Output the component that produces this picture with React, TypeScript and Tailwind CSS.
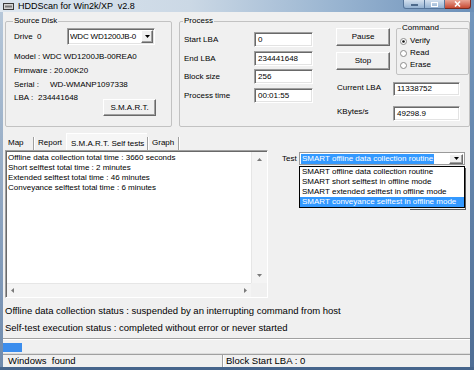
import React from "react";

const sunken =
  "bg-white border border-t-[#a0a0a0] border-l-[#a0a0a0] border-r-white border-b-white shadow-[inset_1px_1px_0_#696969,inset_-1px_-1px_0_#e3e3e3]";
const raised =
  "bg-[#f0f0f0] border border-t-white border-l-white border-r-[#696969] border-b-[#696969] shadow-[inset_-1px_-1px_0_#a0a0a0]";

const Field = ({ value, className = "" }: { value: string; className?: string }) => (
  <div className={`${sunken} flex items-center pl-[3px] text-[8px] leading-none ${className}`}>
    {value}
  </div>
);

const Btn = ({ label, className = "" }: { label: string; className?: string }) => (
  <div className={`${raised} flex items-center justify-center text-[8px] leading-none ${className}`}>
    {label}
  </div>
);

const DownArrow = ({ color = "#000" }: { color?: string }) => (
  <svg width="5" height="3" viewBox="0 0 5 3">
    <path d="M0 0h5L2.5 3z" fill={color} />
  </svg>
);

const Radio = ({ checked }: { checked?: boolean }) => (
  <svg width="7" height="7" viewBox="0 0 7 7">
    <circle cx="3.5" cy="3.5" r="3" fill="white" stroke="#8a8a8a" strokeWidth="1" />
    {checked && <circle cx="3.5" cy="3.5" r="1.3" fill="#111" />}
  </svg>
);

const Group = ({
  label,
  legendClass,
  className = "",
  children,
}: {
  label: string;
  legendClass: string;
  className?: string;
  children: React.ReactNode;
}) => (
  <fieldset className={`border border-[#c2c2c2] rounded-[2px] min-w-0 ${className}`}>
    <legend className={`px-[1px] text-[8px] leading-[10px] ${legendClass}`}>{label}</legend>
    {children}
  </fieldset>
);

const ProcessRow = ({ label, value, className = "" }: { label: string; value: string; className?: string }) => (
  <div className={`flex items-center h-[15px] ${className}`}>
    <span className="w-[70px] text-[8px] leading-[10px] pt-[1px]">{label}</span>
    <Field value={value} className="w-[59px] h-[15px]" />
  </div>
);

const logLines = [
  "Offline data collection total time : 3660 seconds",
  "Short selftest total time : 2 minutes",
  "Extended selftest total time : 46 minutes",
  "Conveyance selftest total time : 6 minutes",
];

const tests = [
  "SMART offline data collection routine",
  "SMART short selftest in offline mode",
  "SMART extended selftest in offline mode",
  "SMART conveyance selftest in offline mode",
];

export default function App() {
  return (
    <div className="w-[474px] h-[370px] flex flex-col overflow-hidden font-['Liberation_Sans',Arial,sans-serif] text-black">
      {/* title bar */}
      <div className="h-[12px] flex items-center bg-[linear-gradient(90deg,#dde6ef_0%,#cbd8e5_40%,#97b3d0_72%,#6b8fb8_100%)]">
        <svg width="11" height="7" viewBox="0 0 11 7" className="ml-[3px]">
          <rect x="0.5" y="0.5" width="10" height="6" fill="#d4d4d4" stroke="#3a3a3a" />
          <rect x="2" y="2.5" width="7" height="2" fill="#7a7a7a" />
        </svg>
        <span className="ml-[4px] text-[9px] leading-none whitespace-pre">HDDScan for Win2k/XP  v2.8</span>
        <div className="ml-auto mr-[3px] self-start flex">
          <div className="w-[22px] h-[9px] rounded-bl-[3px] border border-t-0 border-[#56759a] bg-[linear-gradient(180deg,#d3e0ee,#94b2d2)] flex justify-center items-end pb-[2px]">
            <div className="w-[7px] h-[2px] bg-white border border-[#4d6a8c]" />
          </div>
          <div className="w-[20px] h-[9px] border border-t-0 border-l-0 border-[#56759a] bg-[linear-gradient(180deg,#d3e0ee,#94b2d2)] flex justify-center items-end pb-[1px]">
            <div className="w-[7px] h-[5px] border-[1.5px] border-white" />
          </div>
          <div className="w-[26px] h-[9px] rounded-br-[3px] border border-t-0 border-l-0 border-[#7a2a20] bg-[linear-gradient(180deg,#e9a596,#c74a33)] flex justify-center items-center">
            <svg width="7" height="6" viewBox="0 0 7 6">
              <path d="M1 0.5l5 5M6 0.5l-5 5" stroke="white" strokeWidth="1.6" />
            </svg>
          </div>
        </div>
      </div>

      <div className="flex flex-1 min-h-0">
        <div className="w-[3px] bg-[linear-gradient(180deg,#b6c7d9,#6e8aad)]" />

        {/* client area */}
        <div className="flex-1 min-w-0 bg-[#f0f0f0] flex flex-col text-[8px] leading-[10px]">
          {/* groups */}
          <div className="flex pt-[4px] pl-[2px] gap-[7px] h-[115px]">
            <Group label="Source Disk" legendClass="ml-[7px]" className="w-[167px] h-[111px]">
              <div className="pl-[8px] pt-[2px]">
                <div className="flex items-center h-[17px]">
                  <span className="w-[23px]">Drive</span>
                  <span className="w-[30px]">0</span>
                  <div className={`${sunken} w-[88px] h-[17px] flex items-center pl-[2px] overflow-hidden`}>
                    <span className="flex-1 whitespace-nowrap overflow-hidden tracking-[-0.2px]">WDC WD1200JB-0</span>
                    <div className={`${raised} w-[12px] h-[13px] mr-[1px] flex items-center justify-center shrink-0`}>
                      <DownArrow />
                    </div>
                  </div>
                </div>
                <div className="mt-[7px]">Model : WDC WD1200JB-00REA0</div>
                <div className="mt-[4px]">Firmware : 20.00K20</div>
                <div className="mt-[4px] flex">
                  <span className="w-[36px]">Serial :</span>
                  <span>WD-WMANP1097338</span>
                </div>
                <div className="mt-[3px] flex items-start">
                  <span className="w-[24px]">LBA :</span>
                  <span>234441648</span>
                  <Btn label="S.M.A.R.T." className="ml-auto mr-[15px] mt-[6px] w-[53px] h-[17px]" />
                </div>
              </div>
            </Group>

            <Group label="Process" legendClass="ml-[3px]" className="flex-1 h-[111px]">
              <div className="flex">
                <div className="pl-[4px] pt-[6px]">
                  <ProcessRow label="Start LBA" value="0" />
                  <ProcessRow label="End LBA" value="234441648" className="mt-[4px]" />
                  <ProcessRow label="Block size" value="256" className="mt-[3px]" />
                  <ProcessRow label="Process time" value="00:01:55" className="mt-[4px]" />
                </div>
                <div className="ml-[23px] w-[54px]">
                  <Btn label="Pause" className="mt-[2px] h-[18px]" />
                  <Btn label="Stop" className="mt-[6px] h-[18px]" />
                  <div className="mt-[13px] pl-[1px]">Current LBA</div>
                  <div className="mt-[14px] pl-[1px]">KBytes/s</div>
                </div>
                <div className="ml-[3px] flex-1 min-w-0">
                  <Group label="Command" legendClass="ml-[4px]" className="-mt-[3px] ml-[3px] w-[73px] h-[52px]">
                    <div className="pl-[3px] pt-[3px] flex flex-col gap-[2px]">
                      {[
                        ["Verify", true],
                        ["Read", false],
                        ["Erase", false],
                      ].map(([l, c]) => (
                        <div key={l as string} className="flex items-center h-[10px] gap-[3px]">
                          <Radio checked={c as boolean} />
                          <span>{l as string}</span>
                        </div>
                      ))}
                    </div>
                  </Group>
                  <Field value="11338752" className="mt-[7px] w-[67px] h-[14px]" />
                  <Field value="49298.9" className="mt-[10px] w-[67px] h-[15px]" />
                </div>
              </div>
            </Group>
          </div>

          {/* tabs */}
          <div className="mt-[6px] h-[17px] flex pl-[2px]">
            <div className="w-[28px] pl-[3px] pt-[5px]">Map</div>
            <div className="self-end h-[13px] w-[2px] border-l border-l-[#a0a0a0] border-r border-r-white" />
            <div className="w-[31px] pl-[3px] pt-[5px]">Report</div>
            <div className="w-[81px] pl-[4px] pt-[5px] bg-[#f6f6f6] border-t border-l border-white">S.M.A.R.T. Self tests</div>
            <div className="self-end h-[13px] w-[2px] border-l border-l-[#a0a0a0] border-r border-r-white" />
            <div className="w-[29px] pl-[3px] pt-[5px]">Graph</div>
            <div className="self-end h-[13px] w-[2px] border-l border-l-[#a0a0a0] border-r border-r-white" />
          </div>

          {/* content */}
          <div className="flex h-[148px]">
            <div className="ml-[2px] w-[263px] border border-t-[#a0a0a0] border-l-[#a0a0a0] border-r-white border-b-white shadow-[inset_1px_1px_0_#696969] pt-[1px] pl-[1px] grid grid-cols-[1fr_16px] grid-rows-[1fr_14px]">
              <div className="bg-white pl-[1px] pt-[1px]">
                {logLines.map((l) => (
                  <div key={l} className="whitespace-nowrap">{l}</div>
                ))}
              </div>
              <div className="bg-[#f4f4f4] border-l border-[#e6e6e6] flex flex-col items-center justify-between py-[6px]">
                <svg width="5" height="3" viewBox="0 0 5 3"><path d="M0 3h5L2.5 0z" fill="#7a7a7a" /></svg>
                <svg width="5" height="3" viewBox="0 0 5 3"><path d="M0 0h5L2.5 3z" fill="#7a7a7a" /></svg>
              </div>
              <div className="bg-[#f4f4f4] border-t border-[#e6e6e6] flex items-center justify-between px-[4px]">
                <svg width="3" height="5" viewBox="0 0 3 5"><path d="M3 0v5L0 2.5z" fill="#7a7a7a" /></svg>
                <svg width="3" height="5" viewBox="0 0 3 5"><path d="M0 0v5L3 2.5z" fill="#7a7a7a" /></svg>
              </div>
              <div className="bg-[#f0f0f0]" />
            </div>

            <div className="flex-1 relative">
              <div className="flex items-start pt-[2px]">
                <span className="ml-[14px] w-[17px] pt-[2px] text-[8px]">Test</span>
                <div className="w-[166px] h-[13px] bg-white border border-[#9a9a9a] flex items-center pl-[1px]">
                  <span className="bg-[#3399ff] text-white h-[10px] px-[1px] whitespace-nowrap leading-[10px]">
                    SMART offline data collection routine
                  </span>
                  <div className={`${raised} ml-auto mr-[1px] w-[14px] h-[10px] flex items-center justify-center`}>
                    <DownArrow />
                  </div>
                </div>
              </div>
              {/* control hidden behind the open list */}
              <div className="absolute left-[142px] top-[18px] w-[56px] h-[42px] border-r border-b border-[#5a5a5a]" />
              <div className="absolute left-[31px] top-[16px] w-[166px] bg-white border border-black">
                {tests.map((t, i) => (
                  <div
                    key={t}
                    className={`h-[10px] pl-[2px] whitespace-nowrap leading-[10px] ${
                      i === 3 ? "bg-[#3399ff] text-white" : ""
                    }`}
                  >
                    {t}
                  </div>
                ))}
              </div>
            </div>
          </div>

          {/* status lines */}
          <div className="h-[40px] pl-[2px] pt-[4px] text-[9.5px] leading-[17px] whitespace-nowrap">
            <div>Offline data collection status : suspended by an interrupting command from host</div>
            <div>Self-test execution status : completed without error or never started</div>
          </div>
          <div className="h-[2px] border-t border-[#a0a0a0] border-b border-b-white" />

          {/* progress */}
          <div className="h-[14px] pt-[3px] border-b border-[#dcdcdc]">
            <div className="w-[19px] h-[9px] bg-[#3b8ded]" />
          </div>

          {/* status bar */}
          <div className="h-[13px] flex text-[9.5px] leading-[12px] border-t border-[#a0a0a0]">
            <div className="w-[220px] pl-[5px] border-r border-[#a0a0a0] whitespace-pre">Windows  found</div>
            <div className="flex-1 pl-[2px] border-l border-white">Block Start LBA : 0</div>
          </div>
        </div>

        <div className="w-[4px] bg-[linear-gradient(180deg,#7296bd,#4f6e95)]" />
      </div>
      <div className="h-[3px] bg-[#46658c]" />
    </div>
  );
}
